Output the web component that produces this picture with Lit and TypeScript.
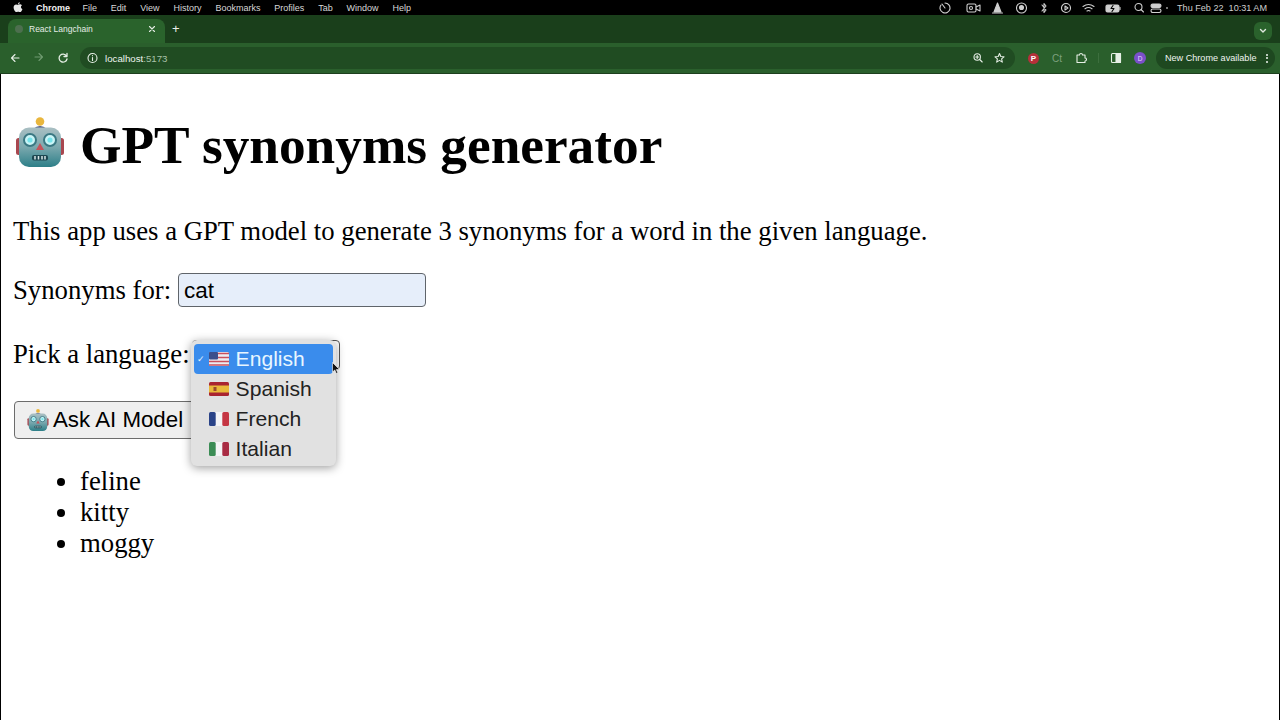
import { LitElement, html, css, svg } from "lit";
import { customElement } from "lit/decorators.js";

const robot = (w: number) => html`<svg class="robot" width=${w} height=${w} viewBox="0 0 50 50" aria-hidden="true">
  <defs>
    <linearGradient id="rf" x1="0" y1="0" x2="0" y2="1">
      <stop offset="0" stop-color="#aabfc3"/><stop offset="0.5" stop-color="#7aa8ae"/><stop offset="1" stop-color="#2d7f88"/>
    </linearGradient>
  </defs>
  <circle cx="25" cy="4.500" r="4.300" fill="#e9b63d"/>
  <path d="M18 12 q7 -6 14 0z" fill="#4d5b84"/>
  <rect x="1" y="21" width="6" height="17" rx="2.500" fill="#a8474f"/>
  <rect x="43" y="21" width="6" height="17" rx="2.500" fill="#a8474f"/>
  <rect x="4" y="10.500" width="42" height="39.500" rx="10" fill="url(#rf)"/>
  <circle cx="15" cy="23" r="6" fill="#c9f4f6" stroke="#3a7883" stroke-width="2"/>
  <circle cx="35" cy="23" r="6" fill="#c9f4f6" stroke="#3a7883" stroke-width="2"/>
  <circle cx="15" cy="23" r="2.600" fill="#76e3ea"/>
  <circle cx="35" cy="23" r="2.600" fill="#76e3ea"/>
  <path d="M25 26 l4 7 h-8z" fill="#c4525b"/>
  <rect x="17" y="38" width="16" height="5.500" rx="2" fill="#1c4650"/>
  <path d="M20 39v3.500M23.500 39v3.500M27 39v3.500M30 39v3.500" stroke="#d7e6e6" stroke-width="1.500"/>
</svg>`;

const flags: Record<string, unknown> = {
  us: svg`<rect width="20" height="14" rx="1.500" fill="#ececf0"/><path d="M0 1.500h20M0 5.500h20M0 9.500h20M0 13h20" stroke="#c9505c" stroke-width="1.700"/><rect width="9" height="7.500" rx="1" fill="#3b4f8c"/>`,
  es: svg`<rect width="20" height="14" rx="1.500" fill="#a92430"/><rect y="3.500" width="20" height="7" fill="#e9b93a"/><rect x="4.500" y="5" width="3" height="4" fill="#9c4a2c"/>`,
  fr: svg`<rect width="20" height="14" rx="1.500" fill="#f4f4f6"/><rect width="6.700" height="14" rx="1.500" fill="#2a4388"/><rect x="13.300" width="6.700" height="14" rx="1.500" fill="#c53644"/>`,
  it: svg`<rect width="20" height="14" rx="1.500" fill="#f4f4f6"/><rect width="6.700" height="14" rx="1.500" fill="#3b8c55"/><rect x="13.300" width="6.700" height="14" rx="1.500" fill="#a92c44"/>`,
};

const flag = (k: string) => html`<svg class="flag" width="20" height="14" viewBox="0 0 20 14" aria-hidden="true">${flags[k]}</svg>`;

const ico = (w: number, body: unknown) => html`<svg width=${w} height="12" viewBox="0 0 ${w} 12" fill="none" stroke="currentColor" stroke-width="1.100" stroke-linecap="round" stroke-linejoin="round" aria-hidden="true">${body}</svg>`;

@customElement("app-root")
export class AppRoot extends LitElement {
  static styles = css`
    :host { display: block; width: 1280px; height: 720px; overflow: hidden; background: #fff; font-family: "Liberation Serif", serif; color: #000; }
    .menubar { height: 15px; background: #000; color: #d8d8d8; display: flex; align-items: center; font: 9px "Liberation Sans", sans-serif; padding: 0 13px 0 13px; }
    .apple { width: 10px; height: 11px; margin-right: 13px; color: #e8e8e8; }
    .menus { display: flex; gap: 13.9px; align-items: center; }
    .menus b { color: #f0f0f0; margin-right: -1.500px; }
    .status { margin-left: auto; display: flex; align-items: center; gap: 13px; color: #cfcfcf; }
    .status > :nth-child(2) { margin-left: 1.500px; }
    .status > :nth-child(3) { margin-left: -2px; }
    .status > :nth-child(5) { margin-left: 1.500px; }
    .status > :nth-child(6) { margin-left: 1px; }
    .status > :nth-child(7) { margin-left: -2.500px; }
    .status > :nth-child(8) { margin-left: -2.500px; }
    .status > :nth-child(10) { margin-left: -7px; }
    .status .sdot { width: 2px; height: 2px; border-radius: 50%; background: #9a9a9a; margin-left: -9px; }
    .status .clock { display: flex; gap: 5px; font-size: 9.100px; margin-left: -4px; }

    .tabstrip { height: 28px; background: #1a3f1b; display: flex; align-items: flex-end; padding: 0 8px; color: #e4ece4; font: 8.500px "Liberation Sans", sans-serif; }
    .tab { width: 157px; height: 24px; background: #2a632c; border-radius: 8px 8px 0 0; display: flex; align-items: center; padding: 0 9px 4px 7px; box-sizing: border-box; gap: 6px; }
    .fav { width: 8px; height: 8px; border-radius: 50%; background: #4d6f4f; flex: none; }
    .tab .title { flex: 1; }
    .plus { margin: 0 0 3px 7px; font-size: 13px; line-height: 22px; color: #eaf0ea; }
    .chev { margin: 0 0 3px auto; width: 18px; height: 18px; border-radius: 6px; background: #2a622c; display: flex; align-items: center; justify-content: center; color: #dfe9df; }

    .toolbar { background: #2a5f2c; border-bottom: 1px solid #1d3f1e; display: flex; align-items: center; padding: 0 5px 0 10px; color: #e6efe6; font: 9px "Liberation Sans", sans-serif; box-sizing: border-box; height: 31px; }
    .nav { display: flex; gap: 14px; align-items: center; width: 70px; flex: none; }
    .nav .off { color: #6f9a70; }
    .omni { width: 935px; flex: none; height: 22px; border-radius: 11px; background: #204c22; display: flex; align-items: center; padding: 0 10px 0 7px; box-sizing: border-box; gap: 7px; }
    .host { color: #eef4ee; font-size: 9.700px; }
    .host span { color: #a9c2aa; }
    .omni .end { margin-left: auto; display: flex; gap: 11px; align-items: center; }
    .ext { display: flex; align-items: center; gap: 13px; margin-left: 13px; }
    .pin { width: 11px; height: 11px; border-radius: 50%; background: #b5303a; color: #fff; font-size: 8px; font-weight: bold; display: flex; align-items: center; justify-content: center; }
    .ct { color: #7da07e; font-size: 10px; width: 10px; }
    .sep { width: 1px; height: 10px; background: #3d6f3e; margin: 0 -2px; }
    .avatar { width: 12px; height: 12px; border-radius: 50%; background: #7a4fc9; color: #e6dcff; font-size: 6.500px; display: flex; align-items: center; justify-content: center; margin-left: -1px; }
    .update { margin-left: auto; height: 22px; width: 119px; border-radius: 11px; background: #1e4820; display: flex; align-items: center; justify-content: space-between; padding: 0 7px 0 9px; box-sizing: border-box; font-size: 9.100px; color: #f0f5f0; }
    .dots { display: flex; flex-direction: column; gap: 1.500px; }
    .dots i { width: 2px; height: 2px; border-radius: 50%; background: #f0f5f0; display: block; }

    .page { box-sizing: border-box; height: 646px; border-left: 1px solid #000; border-right: 1px solid #000; padding: 41px 0 0 12px; font-size: 26.720px; line-height: 31px; }
    h1 { font-size: 53.300px; line-height: 61px; margin: 0; font-weight: bold; display: flex; align-items: center; gap: 15px; }
    h1 .robot { margin: -7px 0 0 2px; }
    p { margin: 40px 0 0; }
    .row { display: flex; align-items: center; }
    .syn { margin-top: 26px; gap: 7px; }
    .input { width: 248px; height: 34px; box-sizing: border-box; border: 1.500px solid #5f646a; border-radius: 4px; background: #e6eefa; font: 22.500px/33px "Liberation Sans", sans-serif; padding: 0 5px; }
    .pick { margin-top: 32px; }
    .select { position: relative; width: 148px; height: 30px; box-sizing: border-box; border: 1.500px solid #555; border-radius: 4px; margin-left: 2px; }
    .popup { position: absolute; left: -2px; top: -1px; width: 145px; height: 126px; background: #e1e1e1; border-radius: 6px; box-shadow: 0 2px 10px rgba(0,0,0,.38); padding: 4px 3px; box-sizing: border-box; font: 21.100px/30px "Liberation Sans", sans-serif; color: #222; z-index: 2; }
    .opt { height: 30px; display: flex; align-items: center; border-radius: 4px; padding-left: 15px; gap: 7px; }
    .opt.sel { background: #3a8cec; color: #e8f6ff; position: relative; }
    .check { position: absolute; left: 3px; top: 0; font-size: 9px; }
    .flag { flex: none; }
    .cursor { position: absolute; left: 139px; top: 21px; z-index: 3; }
    .btn { margin: 31px 0 0 1px; width: 182px; height: 38px; box-sizing: border-box; border: 1.500px solid #6c6c6c; border-radius: 4px; background: #efefef; display: flex; align-items: center; gap: 4px; padding: 0 0 0 12px; font: 22.300px "Liberation Sans", sans-serif; }
    ul { margin: 27px 0 0; padding: 0 0 0 67px; }
  `;

  render() {
    return html`
      <div class="menubar">
        <svg class="apple" viewBox="0 0 10 12" aria-hidden="true"><path fill="currentColor" d="M7 0.300c.1 1-.9 2.200-2 2.100C4.900 1.300 6 .3 7 .3zM5 3c.6 0 1.200-.5 2.200-.5.8 0 1.600.4 2.100 1.100-1.700 1-1.400 3.500.5 4.200-.5 1.300-1.500 3.200-2.600 3.200-.8 0-1-.5-2-.5s-1.300.5-2 .5C1.800 11 .2 8.300.2 6 .2 3.800 1.600 2.600 3 2.600c.8 0 1.500.4 2 .4z"/></svg>
        <div class="menus">
          <b>Chrome</b><span>File</span><span>Edit</span><span>View</span><span>History</span><span>Bookmarks</span><span>Profiles</span><span>Tab</span><span>Window</span><span>Help</span>
        </div>
        <div class="status">
          ${ico(12, svg`<path d="M6 1a5 5 0 1 1-4 2"/><path d="M3 2l3 4"/>`)}
          ${ico(15, svg`<rect x="1" y="2" width="9" height="8" rx="1.500"/><path d="M10 5l4-2v6l-4-2"/><circle cx="5" cy="6" r="1.500"/>`)}
          ${ico(11, svg`<path d="M5.500 1L9 10H2z" fill="currentColor"/><path d="M.5 11h10"/>`)}
          ${ico(11, svg`<circle cx="5.500" cy="6" r="5"/><circle cx="5.500" cy="5.500" r="2" fill="currentColor"/>`)}
          ${ico(6, svg`<path d="M1 3l4 5-2 2.500v-9l2 2.500-4 5"/>`)}
          ${ico(10, svg`<circle cx="5" cy="6" r="4.500"/><path d="M4 4l3 2-3 2z"/>`)}
          ${ico(13, svg`<path d="M1 4.500q5.500-4 11 0M3 6.800q3.500-2.500 7 0M5 9q1.500-1 3 0"/>`)}
          ${ico(16, svg`<rect x="1" y="3" width="13" height="7" rx="1.500" fill="currentColor"/><path d="M15 5.500v2"/><path d="M8 3.500L6 6.500h3L7 9.500" stroke="#000"/>`)}
          ${ico(10, svg`<circle cx="4.500" cy="5" r="3.500"/><path d="M7 7.500l2.500 2.500"/>`)}
          ${ico(12, svg`<rect x="1" y="2" width="10" height="3.500" rx="1.700" fill="currentColor"/><rect x="1" y="7" width="10" height="3.500" rx="1.700"/>`)}
          <span class="sdot"></span>
          <div class="clock"><span>Thu Feb 22</span><span>10:31 AM</span></div>
        </div>
      </div>

      <div class="tabstrip">
        <div class="tab">
          <span class="fav"></span><span class="title">React Langchain</span>
          ${ico(8, svg`<path d="M1.500 3.500l5 5M6.500 3.500l-5 5"/>`)}
        </div>
        <span class="plus">+</span>
        <div class="chev">${ico(8, svg`<path d="M1.500 4.500L4 7l2.500-2.500" stroke-width="1.400"/>`)}</div>
      </div>

      <div class="toolbar">
        <div class="nav">
          ${ico(10, svg`<path d="M9 6H1.500M5 2.500L1.500 6 5 9.500"/>`)}
          <span class="off">${ico(10, svg`<path d="M1 6h7.500M5 2.500L8.500 6 5 9.500"/>`)}</span>
          ${ico(10, svg`<path d="M8.500 4A4 4 0 1 0 9 7M9 1.500V4.500H6" stroke-width="1.300"/>`)}
        </div>
        <div class="omni">
          ${ico(11, svg`<circle cx="5.500" cy="6" r="4.500"/><path d="M5.500 5.500v3M5.500 3.600v.2"/>`)}
          <span class="host">localhost<span>:5173</span></span>
          <div class="end">
            ${ico(10, svg`<circle cx="4.200" cy="5" r="3.200"/><path d="M6.700 7.500l2.500 2.500M2.800 5h2.800M4.200 3.600v2.800"/>`)}
            ${ico(11, svg`<path d="M5.500 1.500l1.300 3 3.200.3-2.400 2.100.7 3.200-2.800-1.700-2.800 1.700.7-3.200L1 4.800l3.200-.3z"/>`)}
          </div>
        </div>
        <div class="ext">
          <span class="pin">P</span>
          <span class="ct">Ct</span>
          ${ico(12, svg`<path d="M2 3h2.500a1.500 1.500 0 0 1 3 0H10v3a1.500 1.500 0 0 1 0 3v1.500H2z"/>`)}
          <span class="sep"></span>
          ${ico(12, svg`<rect x="1.500" y="1.500" width="9" height="9" rx="1"/><rect x="6" y="1.500" width="4.500" height="9" fill="currentColor"/>`)}
          <span class="avatar">D</span>
        </div>
        <div class="update"><span>New Chrome available</span><span class="dots"><i></i><i></i><i></i></span></div>
      </div>

      <div class="page">
        <h1>${robot(50)}<span>GPT synonyms generator</span></h1>
        <p>This app uses a GPT model to generate 3 synonyms for a word in the given language.</p>
        <div class="row syn"><span>Synonyms for:</span><div class="input">cat</div></div>
        <div class="row pick">
          <span>Pick a language:</span>
          <div class="select">
            <div class="popup">
              <div class="opt sel"><span class="check">✓</span>${flag("us")}<span>English</span></div>
              <div class="opt">${flag("es")}<span>Spanish</span></div>
              <div class="opt">${flag("fr")}<span>French</span></div>
              <div class="opt">${flag("it")}<span>Italian</span></div>
            </div>
            <svg class="cursor" width="8" height="13" viewBox="0 0 8 13" aria-hidden="true"><path d="M.5.5v9.500l2.300-2 1.500 3.500 1.500-.7L4.300 7.500H7.500z" fill="#111" stroke="#fff" stroke-width=".6"/></svg>
          </div>
        </div>
        <div class="btn">${robot(22)}<span>Ask AI Model</span></div>
        <ul><li>feline</li><li>kitty</li><li>moggy</li></ul>
      </div>
    `;
  }
}
